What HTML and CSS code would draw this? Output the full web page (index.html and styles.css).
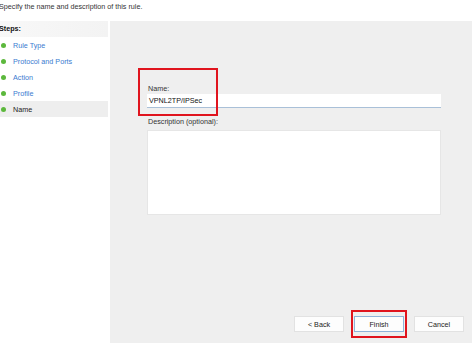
FILE: index.html
```html
<!DOCTYPE html>
<html lang="en">
<head>
<meta charset="UTF-8" />
<title>New Inbound Rule Wizard</title>
<link rel="stylesheet" href="styles.css">
</head>
<body>
  <div class="header">Specify the name and description of this rule.</div>
  <div class="main">
    <div class="steps">
      <div class="steps-title">Steps:</div>
      <div class="step"><span class="dot"></span><span class="link">Rule Type</span></div>
      <div class="step"><span class="dot"></span><span class="link">Protocol and Ports</span></div>
      <div class="step"><span class="dot"></span><span class="link">Action</span></div>
      <div class="step"><span class="dot"></span><span class="link">Profile</span></div>
      <div class="step current"><span class="dot"></span><span>Name</span></div>
    </div>
    <div class="content">
      <div class="form">
        <label class="label">Name:</label>
        <div class="input">VPNL2TP/IPSec</div>
        <label class="label desc-label">Description (optional):</label>
        <div class="textarea"></div>
        <div class="mark mark-name"></div>
      </div>
      <div class="buttons">
        <button class="btn">&lt; Back</button>
        <div class="finish-wrap">
          <button class="btn btn-default">Finish</button>
        </div>
        <button class="btn">Cancel</button>
      </div>
    </div>
  </div>
</body>
</html>
```
FILE: styles.css
```css
body {
  margin: 0;
  background: #fff;
  font-family: "Liberation Sans", Arial, sans-serif;
  font-size: 7.2px;
  color: #222;
  width: 474px;
  height: 346px;
  overflow: hidden;
}
.header {
  height: 21px;
  line-height: 13px;
  margin-left: -1px;
  color: #333;
}
.main {
  display: flex;
  height: 322px;
}
.steps {
  width: 108px;
}
.steps-title {
  height: 16px;
  line-height: 16px;
  font-weight: bold;
  color: #111;
  background: linear-gradient(to right, #f8f8f8, #f3f3f3);
  margin-left: -1px;
}
.step {
  display: flex;
  align-items: center;
  height: 16px;
}
.step .dot {
  width: 5px;
  height: 5px;
  border-radius: 50%;
  background: #5cb83c;
  margin: 0 7px 0 1px;
}
.step .link {
  color: #3a7bd0;
}
.step.current {
  background: #eeeeee;
  color: #222;
}
.content {
  flex: 1;
  margin: 0 2px 0 2px;
  background: #efefef;
  display: flex;
  flex-direction: column;
  justify-content: space-between;
}
.form {
  position: relative;
  padding: 62px 31px 0 37px;
}
.label {
  display: block;
  height: 11px;
  line-height: 11px;
  padding-left: 1px;
  color: #333;
}
.input {
  height: 13px;
  line-height: 13px;
  background: #fff;
  border-bottom: 1px solid #a9c0d8;
  padding-left: 2px;
  color: #111;
}
.desc-label {
  margin-top: 8px;
}
.textarea {
  height: 83px;
  margin-top: 3px;
  background: #fff;
  border: 1px solid #e6e6e6;
}
.mark {
  position: absolute;
  border: 2px solid #e0141e;
}
.mark-name {
  left: 28px;
  top: 47px;
  width: 76px;
  height: 44px;
}
.buttons {
  display: flex;
  justify-content: flex-end;
  align-items: center;
  gap: 7px;
  padding: 0 8px 5px 0;
}
.btn {
  width: 50px;
  height: 16px;
  padding: 0;
  font-family: inherit;
  font-size: 7.2px;
  color: #222;
  background: #fdfdfd;
  border: 1px solid #e2e2e2;
}
.finish-wrap {
  border: 2px solid #e0141e;
  padding: 4px 1px;
}
.btn-default {
  border-color: #8fb3d9;
}
```
